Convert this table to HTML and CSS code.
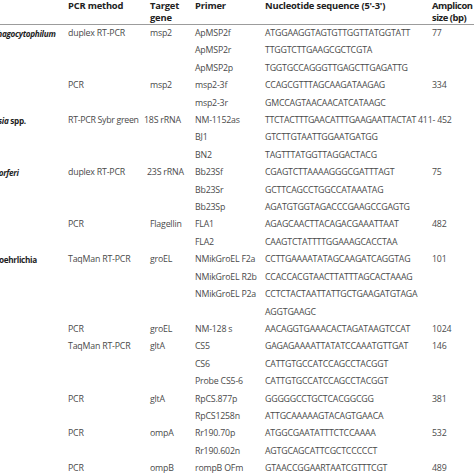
FILE: index.html
```html
<!DOCTYPE html>
<html lang="en">
<head>
<meta charset="utf-8">
<title>PCR assays</title>
<link rel="stylesheet" href="styles.css">
</head>
<body>
<div class="frame">
<table class="assays">
  <colgroup>
    <col class="c-org"><col class="c-method"><col class="c-gene"><col class="c-primer"><col class="c-seq"><col class="c-size">
  </colgroup>
  <thead>
    <tr>
      <th></th>
      <th>PCR method</th>
      <th>Target gene</th>
      <th>Primer</th>
      <th>Nucleotide sequence (5'-3')</th>
      <th class="tight">Amplicon size (bp)</th>
    </tr>
  </thead>
  <tbody>
    <tr><td class="org in-13"><i>A. phagocytophilum</i></td><td>duplex RT-PCR</td><td>msp2</td><td>ApMSP2f</td><td>ATGGAAGGTAGTGTTGGTTATGGTATT</td><td>77</td></tr>
    <tr><td></td><td></td><td></td><td>ApMSP2r</td><td>TTGGTCTTGAAGCGCTCGTA</td><td></td></tr>
    <tr><td></td><td></td><td></td><td>ApMSP2p</td><td>TGGTGCCAGGGTTGAGCTTGAGATTG</td><td></td></tr>
    <tr><td></td><td>PCR</td><td>msp2</td><td>msp2-3f</td><td>CCAGCGTTTAGCAAGATAAGAG</td><td>334</td></tr>
    <tr><td></td><td></td><td></td><td>msp2-3r</td><td>GMCCAGTAACAACATCATAAGC</td><td></td></tr>
    <tr><td class="org in-9"><i>Babesia</i> spp.</td><td class="squeeze">RT-PCR Sybr green</td><td class="pull-6">18S rRNA</td><td>NM-1152as</td><td class="squeeze">TTCTACTTTGAACATTTGAAGAATTACTAT</td><td class="pull-14">411- 452</td></tr>
    <tr><td></td><td></td><td></td><td>BJ1</td><td>GTCTTGTAATTGGAATGATGG</td><td></td></tr>
    <tr><td></td><td></td><td></td><td>BN2</td><td>TAGTTTATGGTTAGGACTACG</td><td></td></tr>
    <tr><td class="org pull-2"><i>B. burgdorferi</i></td><td>duplex RT-PCR</td><td class="pull-3">23S rRNA</td><td>Bb23Sf</td><td>CGAGTCTTAAAAGGGCGATTTAGT</td><td>75</td></tr>
    <tr><td></td><td></td><td></td><td>Bb23Sr</td><td>GCTTCAGCCTGGCCATAAATAG</td><td></td></tr>
    <tr><td></td><td></td><td></td><td>Bb23Sp</td><td>AGATGTGGTAGACCCGAAGCCGAGTG</td><td></td></tr>
    <tr><td></td><td>PCR</td><td>Flagellin</td><td>FLA1</td><td>AGAGCAACTTACAGACGAAATTAAT</td><td>482</td></tr>
    <tr><td></td><td></td><td></td><td>FLA2</td><td>CAAGTCTATTTTGGAAAGCACCTAA</td><td></td></tr>
    <tr><td class="org in-17">Neoehrlichia</td><td>TaqMan RT-PCR</td><td>groEL</td><td>NMikGroEL F2a</td><td>CCTTGAAAATATAGCAAGATCAGGTAG</td><td>101</td></tr>
    <tr><td></td><td></td><td></td><td>NMikGroEL R2b</td><td>CCACCACGTAACTTATTTAGCACTAAAG</td><td></td></tr>
    <tr><td></td><td></td><td></td><td>NMikGroEL P2a</td><td>CCTCTACTAATTATTGCTGAAGATGTAGA<br>AGGTGAAGC</td><td></td></tr>
    <tr><td></td><td>PCR</td><td>groEL</td><td>NM-128 s</td><td>AACAGGTGAAACACTAGATAAGTCCAT</td><td>1024</td></tr>
    <tr><td></td><td>TaqMan RT-PCR</td><td>gltA</td><td>CS5</td><td>GAGAGAAAATTATATCCAAATGTTGAT</td><td>146</td></tr>
    <tr><td></td><td></td><td></td><td>CS6</td><td>CATTGTGCCATCCAGCCTACGGT</td><td></td></tr>
    <tr><td></td><td></td><td></td><td>Probe CS5-6</td><td>CATTGTGCCATCCAGCCTACGGT</td><td></td></tr>
    <tr><td></td><td>PCR</td><td>gltA</td><td>RpCS.877p</td><td>GGGGGCCTGCTCACGGCGG</td><td>381</td></tr>
    <tr><td></td><td></td><td></td><td>RpCS1258n</td><td>ATTGCAAAAAGTACAGTGAACA</td><td></td></tr>
    <tr><td></td><td>PCR</td><td>ompA</td><td>Rr190.70p</td><td>ATGGCGAATATTTCTCCAAAA</td><td>532</td></tr>
    <tr><td></td><td></td><td></td><td>Rr190.602n</td><td>AGTGCAGCATTCGCTCCCCCT</td><td></td></tr>
    <tr><td></td><td>PCR</td><td>ompB</td><td>rompB OFm</td><td>GTAACCGGAARTAATCGTTTCGT</td><td>489</td></tr>
  </tbody>
</table>
</div>
</body>
</html>
```

FILE: styles.css
```css
html, body {
  margin: 0;
  padding: 0;
  background: #ffffff;
}
body {
  width: 474px;
  height: 474px;
  overflow: hidden;
  font-family: "Open Sans", "Liberation Sans", sans-serif;
  font-size: 8.8px;
  letter-spacing: -0.2px;
  color: #4a4a4a;
}
.frame {
  margin-left: -29px;
  width: 503px;
}
.assays {
  width: 503px;
  table-layout: fixed;
  border-collapse: collapse;
  border-spacing: 0;
}
.c-org { width: 97px; }
.c-method { width: 82px; }
.c-gene { width: 45px; }
.c-primer { width: 70px; }
.c-seq { width: 167px; }
.c-size { width: 42px; }

.assays th {
  text-align: left;
  vertical-align: top;
  font-weight: 700;
  color: #222222;
  line-height: 12px;
  height: 23px;
  padding: 0;
  border-bottom: 1px solid #9c9c9c;
  font-size: 9.4px;
  letter-spacing: -0.2px;
}
.assays th.tight {
  letter-spacing: -0.45px;
}
.assays td {
  padding: 0;
  vertical-align: top;
  line-height: 17.4px;
  height: 17.4px;
  white-space: nowrap;
}
.assays td.org {
  font-weight: 700;
  font-size: 8.2px;
  letter-spacing: -0.3px;
  color: #1e1e1e;
}
.assays td.squeeze {
  letter-spacing: -0.3px;
}
.pull-2 { text-indent: -2px; }
.pull-3 { text-indent: -3px; }
.pull-6 { text-indent: -6px; }
.pull-14 { text-indent: -14px; }
.in-9 { text-indent: 9px; }
.in-13 { text-indent: 13px; }
.in-17 { text-indent: 17px; }
```
